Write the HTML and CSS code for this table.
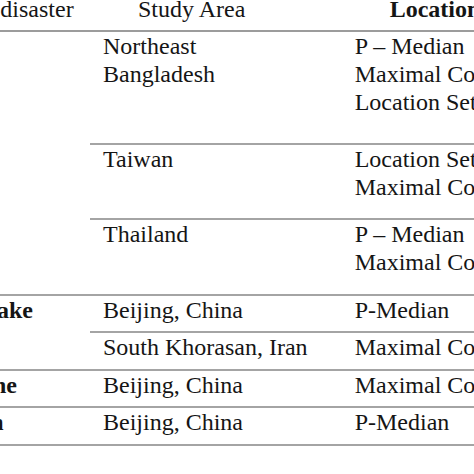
FILE: index.html
```html
<!DOCTYPE html>
<html lang="en">
<head>
<meta charset="utf-8">
<title>Disaster location models</title>
<link rel="stylesheet" href="styles.css">
</head>
<body>
<div class="page">
  <table class="models">
    <colgroup>
      <col class="c-type">
      <col class="c-area">
      <col class="c-model">
    </colgroup>
    <thead>
      <tr>
        <th class="h-type">Type of disaster</th>
        <th class="h-area">Study Area</th>
        <th class="h-model">Location Model</th>
      </tr>
    </thead>
    <tbody>
      <tr class="r-tall">
        <td class="type" rowspan="3">Flood</td>
        <td>Northeast<br>Bangladesh</td>
        <td>P – Median<br>Maximal Covering<br>Location Set Covering</td>
      </tr>
      <tr class="r-mid">
        <td>Taiwan</td>
        <td>Location Set Covering<br>Maximal Covering</td>
      </tr>
      <tr class="r-mid2">
        <td>Thailand</td>
        <td>P – Median<br>Maximal Covering</td>
      </tr>
      <tr class="r-a">
        <td class="type" rowspan="2">Earthquake</td>
        <td>Beijing, China</td>
        <td>P-Median</td>
      </tr>
      <tr class="r-b">
        <td>South Khorasan, Iran</td>
        <td>Maximal Covering</td>
      </tr>
      <tr class="r-a">
        <td class="type">Hurricane</td>
        <td>Beijing, China</td>
        <td>Maximal Covering</td>
      </tr>
      <tr class="r-b last">
        <td class="type">Pollution</td>
        <td>Beijing, China</td>
        <td>P-Median</td>
      </tr>
    </tbody>
  </table>
</div>
</body>
</html>
```

FILE: styles.css
```css
html, body {
  margin: 0;
  padding: 0;
  background: #ffffff;
}

.page {
  width: 474px;
  height: 474px;
  overflow: hidden;
  background: #ffffff;
}

.models {
  table-layout: fixed;
  width: 894.4px;
  border-collapse: separate;
  border-spacing: 0;
  margin-left: -102.7px;
  margin-top: -5px;
  font-family: "Liberation Serif", "Times New Roman", serif;
  font-size: 24px;
  line-height: 28px;
  color: #151515;
  white-space: nowrap;
}

.c-type { width: 192.7px; }
.c-area { width: 251.7px; }
.c-model { width: 450px; }

.models th,
.models td {
  text-align: left;
  vertical-align: top;
  padding: 0 13px;
  overflow: visible;
}

.models th {
  font-weight: normal;
  padding-bottom: 7px;
  border-bottom: 2px solid #9c9c9c;
}

.models th.h-type {
  padding-left: 23.4px;
  padding-right: 0;
}

.models th.h-area {
  padding-left: 48px;
}

.models th.h-model {
  padding-left: 48px;
  font-weight: bold;
}

.models td.type {
  font-weight: bold;
}

.models tbody tr + tr td {
  border-top: 2px solid #a4a4a4;
}

.models tr.r-tall td { padding-bottom: 27px; }
.models tr.r-mid td { padding-bottom: 17px; }
.models tr.r-mid2 td { padding-bottom: 18px; }
.models tr.r-a td { padding-bottom: 7px; }
.models tr.r-b td { padding-bottom: 8px; }

.models tr.last td {
  border-bottom: 2px solid #a4a4a4;
}
```
